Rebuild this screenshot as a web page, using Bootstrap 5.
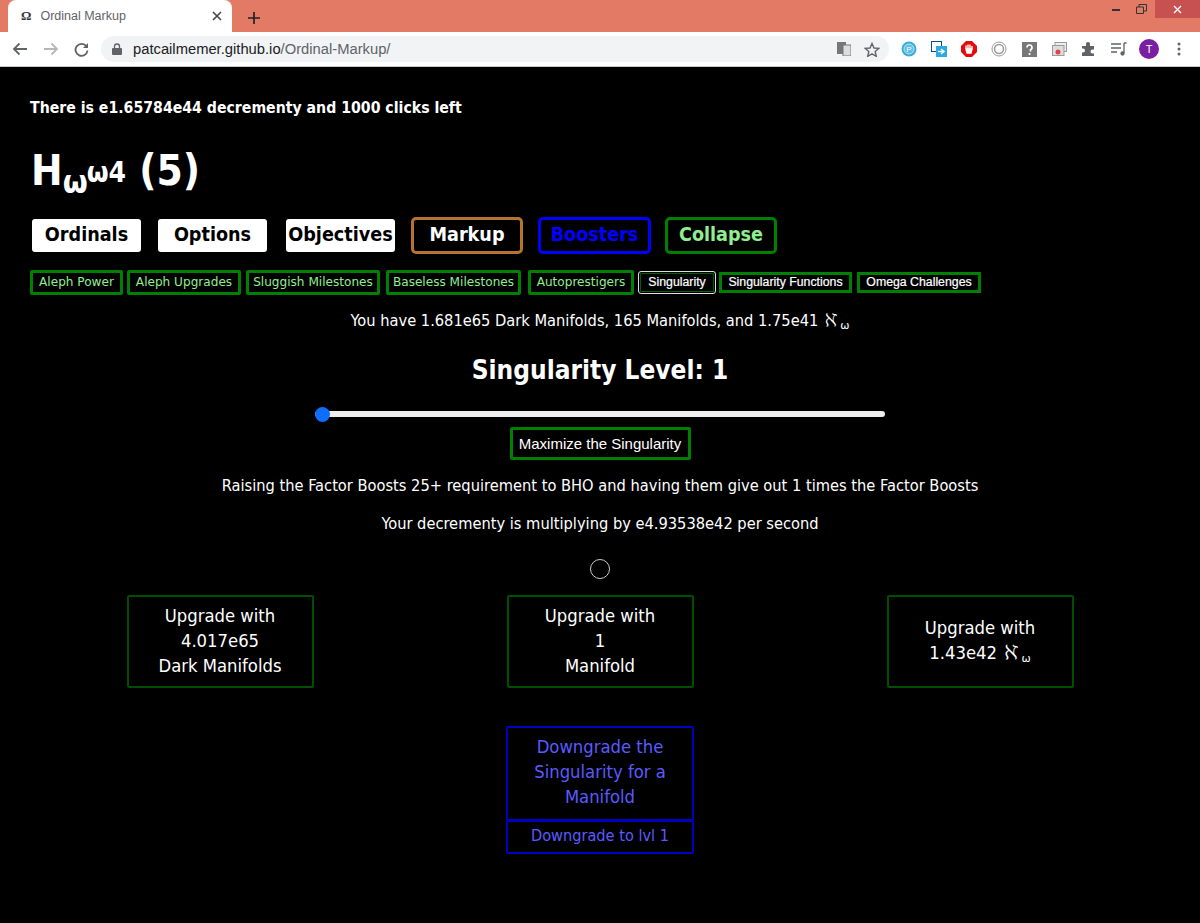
<!DOCTYPE html>
<html lang="en">
<head>
<meta charset="UTF-8" />
<meta name="viewport" content="width=device-width, initial-scale=1.0" />
<title>Ordinal Markup</title>
<link href="https://cdn.jsdelivr.net/npm/bootstrap@5.3.3/dist/css/bootstrap.min.css" rel="stylesheet" />
<style>
  html, body { height: 100%; }
  body { background: #000; color: #fff; font-family: "DejaVu Sans Condensed", "DejaVu Sans", sans-serif; overflow: hidden; }
  .tabstrip { height: 32px; background: #e27a66; }
  .chrome-tab { width: 224px; height: 32px; background: #fff; border-radius: 8px 8px 0 0; margin-left: 8px; padding: 0 10px 0 13px; font: 12.5px "Liberation Sans", sans-serif; color: #5f6368; }
  .win-close { width: 45px; height: 18px; background: #c75050; }
  .toolbar { height: 35px; background: #fff; border-bottom: 1px solid #c8c8c8; padding-left: 12px; }
  .omnibox { width: 788px; flex-shrink: 0; height: 26px; background: #f1f3f4; border-radius: 13px; font: 14.75px "Liberation Sans", sans-serif; padding: 0 9px 0 11px; margin-left: 12px; color: #202124; }
  .omnibox span { color: #5f6368; }
  .tool-ico { width: 30px; display: flex; justify-content: center; }
  .game { height: 856px; padding: 0 30px; }
  .status-line { font-weight: 700; font-size: 15.7px; padding-top: 32px; line-height: 18px; }
  .big-title { font-weight: 700; font-size: 42px; line-height: 46px; margin: 31px 0 0 1px; }
  .big-title sub { font-size: 32px; bottom: -.25em; line-height: 0; }
  .big-title sup { font-size: 28px; top: -.12em; line-height: 0; margin-left: -1px; }
  .main-tabs { margin-top: 23px; padding-left: 2px; height: 36px; }
  .main-btn { height: 33px; width: 109px; background: #fff; color: #000; border-radius: 3px; font-weight: 700; font-size: 19.6px; line-height: 1; display: flex; align-items: center; justify-content: center; white-space: nowrap; margin-top: 2px; padding: 0 0 2px; }
  .main-btn.framed { height: 37px; margin-top: 0; background: #000; border: 3px solid; border-radius: 5px; }
  .sub-tabs { margin-top: 17px; height: 25px; }
  .sub-btn { height: 25px; border: 3px solid #008000; border-radius: 2px; background: #000; color: #90ee90; font-family: "DejaVu Sans", sans-serif; font-size: 12.1px; display: flex; align-items: center; justify-content: center; white-space: nowrap; padding: 0; }
  .sub-btn.plain { color: #fff; font-family: "Liberation Sans", sans-serif; font-size: 12.3px; height: 21px; border-radius: 0; -webkit-text-stroke: .2px #fff; }
  .sub-btn.picked { height: 23px; border: 1px solid #ddd; border-radius: 3px; box-shadow: inset 0 0 0 1px #000, inset 0 0 0 2px #006000; }
  .info-line { font-size: 16.3px; line-height: 20px; text-align: center; }
  .aleph { font-family: "Noto Sans CJK JP", "DejaVu Sans", sans-serif; font-size: 1em; line-height: 1; }
  .aleph sub { font-family: "DejaVu Sans", sans-serif; font-size: 11px; margin-left: 1px; }
  .level-title { font-size: 26px; font-weight: 700; line-height: 32px; text-align: center; margin-top: 23px; }
  .level-range { display: block; width: 570px; height: 16px; margin: 20px auto 0; }
  .level-range::-webkit-slider-runnable-track { background: #efefef; height: 6px; border-radius: 4px; }
  .level-range::-webkit-slider-thumb { margin-top: -4.5px; width: 15px; height: 15px; background: #0d6efd; }
  .max-btn { width: 181px; height: 33px; border: 3px solid #008000; background: #000; color: #fff; font: 15px "Liberation Sans", sans-serif; display: flex; align-items: center; justify-content: center; margin: 5px auto 0; padding: 0; border-radius: 2px; white-space: nowrap; }
  .ring { display: block; width: 20px; height: 20px; background: #000; border: 1.5px solid #ccc; margin: 0 auto; border-radius: 50%; }
  .upgrade-row { column-gap: 193px; margin-top: 16px; }
  .shop-box { width: 187px; height: 93px; background: #000; color: #fff; border: 2px solid #004f00; border-radius: 2px; font-size: 18.3px; line-height: 25px; display: flex; flex-direction: column; justify-content: center; align-items: center; text-align: center; padding: 0 10px 3px; }
  .down-stack { width: 188px; margin: 38px auto 0; color: #5a5aff; font-size: 18.3px; line-height: 25px; text-align: center; }
  .down-box { border: 2px solid #0000c0; border-radius: 2px; height: 95px; padding: 5px 10px 9px; background: #000; color: inherit; width: 100%; display: block; }
  .down-small { border: 2px solid #0000c0; border-radius: 2px; height: 34px; font-size: 16.2px; line-height: 28px; background: #000; color: inherit; width: 100%; display: block; padding: 0 0 2px; margin-top: -1px; }
</style>
</head>
<body>
  <div class="tabstrip d-flex align-items-end position-relative">
    <div class="chrome-tab d-flex align-items-center">
      <span style="font:700 13px 'Liberation Serif',serif;color:#333;margin-right:9px">Ω</span>
      <span class="flex-grow-1">Ordinal Markup</span>
      <svg width="10" height="10" viewBox="0 0 10 10"><path d="M1 1l8 8M9 1l-8 8" stroke="#444" stroke-width="1.6"/></svg>
    </div>
    <svg class="ms-3 mb-2" width="12" height="12" viewBox="0 0 12 12"><path d="M6 0v12M0 6h12" stroke="#222" stroke-width="1.7"/></svg>
    <div class="ms-auto d-flex align-items-start align-self-start">
      <svg class="me-3 mt-2" width="8" height="4" viewBox="0 0 8 4"><path d="M0 2h8" stroke="#333" stroke-width="2"/></svg>
      <svg class="me-2" style="margin-top:4px" width="11" height="10" viewBox="0 0 11 10"><path d="M.5 3h7v6.500h-7zM3 3V.5h7.500V7H8" fill="none" stroke="#333"/></svg>
      <div class="win-close d-flex align-items-center justify-content-center"><svg width="9" height="9" viewBox="0 0 9 9"><path d="M1 1l7 7M8 1l-7 7" stroke="#fff" stroke-width="1.4"/></svg></div>
    </div>
  </div>
  <div class="toolbar d-flex align-items-center">
    <svg width="16" height="14" viewBox="0 0 16 14"><path d="M15 7H2M7.500 1.500L2 7l5.500 5.500" fill="none" stroke="#5f6368" stroke-width="1.800"/></svg>
    <svg style="margin-left:15px" width="16" height="14" viewBox="0 0 16 14"><path d="M1 7h13M8.500 1.500L14 7l-5.500 5.500" fill="none" stroke="#b4b6b9" stroke-width="1.800"/></svg>
    <svg style="margin-left:15px" width="15" height="15" viewBox="0 0 15 15"><path d="M12.500 4.500A6 6 0 1 0 13.500 8.500" fill="none" stroke="#5f6368" stroke-width="1.800"/><path d="M14 1v5H9z" fill="#5f6368"/></svg>
    <div class="omnibox d-flex align-items-center">
      <svg style="margin-right:11px" width="10" height="12" viewBox="0 0 10 12"><path d="M2.500 5V3.500a2.500 2.500 0 0 1 5 0V5" fill="none" stroke="#5f6368" stroke-width="1.300"/><rect y="5" width="10" height="7" rx="1" fill="#5f6368"/></svg>
      patcailmemer.github.io<span>/Ordinal-Markup/</span>
      <svg class="ms-auto" width="14" height="14" viewBox="0 0 14 14"><rect width="9" height="12" fill="#777"/><rect x="6" y="3" width="8" height="11" fill="#ddd" stroke="#777"/></svg>
      <svg style="margin-left:13px" width="16" height="15" viewBox="0 0 16 15"><path d="M8 1.500l2 4.500 4.800.4-3.600 3.200 1.100 4.700L8 11.800l-4.300 2.500 1.100-4.700L1.200 6.400 6 6z" fill="none" stroke="#5f6368" stroke-width="1.400"/></svg>
    </div>
    <div class="d-flex align-items-center" style="margin-left:5px">
      <span class="tool-ico"><svg width="16" height="16"><circle cx="8" cy="8" r="7.500" fill="#3fa9d8"/><circle cx="8" cy="8" r="5" fill="#5cc0ea" stroke="#fff" stroke-width=".6"/><text x="8" y="11" font-size="8" fill="#fff" text-anchor="middle" font-family="Liberation Sans">P</text></svg></span>
      <span class="tool-ico"><svg width="16" height="16"><rect x=".5" y=".5" width="10" height="10" fill="none" stroke="#0b4f8a"/><rect x="5" y="5" width="11" height="11" fill="#29abe2"/><path d="M7 10.500h5M10 8l3 2.500-3 2.500" fill="none" stroke="#fff" stroke-width="1.500"/></svg></span>
      <span class="tool-ico"><svg width="16" height="16"><path d="M5 0h6l5 5v6l-5 5H5l-5-5V5z" fill="#e30b0b"/><path d="M5 8V4.500M7 8V3.500M9 8V3.500M11 8V5M5 8l1 4h4l1-4z" stroke="#fff" stroke-width="1.400" fill="#fff"/></svg></span>
      <span class="tool-ico"><svg width="16" height="16" fill="none" stroke="#9a9a9a"><circle cx="8" cy="8" r="7"/><circle cx="8" cy="8" r="4.500" stroke-width="1.500"/></svg></span>
      <span class="tool-ico"><svg width="15" height="15"><rect width="15" height="15" fill="#777"/><path d="M5 5.500a2.500 2.500 0 1 1 3.500 2.300V9.500M7.500 11v2" fill="none" stroke="#fff" stroke-width="1.700"/></svg></span>
      <span class="tool-ico"><svg width="15" height="14"><rect x="3" y=".5" width="11.500" height="9" fill="#eee" stroke="#999"/><rect x=".5" y="3.500" width="11.500" height="10" fill="#ddd" stroke="#999"/><circle cx="6" cy="10" r="2.500" fill="#d44"/></svg></span>
      <span class="tool-ico"><svg width="16" height="16" viewBox="0 0 16 16"><path d="M1 5h4V3a2 2 0 0 1 4 0v2h4v3.500h-1.500a2 2 0 0 0 0 4H13V15H1v-3.500h1a2 2 0 0 0 0-4H1z" fill="#5f6368"/></svg></span>
      <span class="tool-ico"><svg width="16" height="14" viewBox="0 0 16 14" fill="none" stroke="#5f6368" stroke-width="1.300"><path d="M0 2h10M0 6h10M0 10h6"/><path d="M13 1v10M15.500 1H13"/><circle cx="11.500" cy="11.500" r="1.500" fill="#5f6368"/></svg></span>
      <span class="tool-ico"><svg width="20" height="20"><circle cx="10" cy="10" r="10" fill="#7b1fa2"/><text x="10" y="14" font-size="11" fill="#fff" text-anchor="middle" font-family="Liberation Sans">T</text></svg></span>
      <span class="tool-ico"><svg width="4" height="14"><circle cx="2" cy="2" r="1.500" fill="#5f6368"/><circle cx="2" cy="7" r="1.500" fill="#5f6368"/><circle cx="2" cy="12" r="1.500" fill="#5f6368"/></svg></span>
    </div>
  </div>

  <main class="game">
    <div class="status-line">There is e1.65784e44 decrementy and 1000 clicks left</div>
    <h1 class="big-title">H<sub>ω</sub><sup>ω4</sup> (5)</h1>

    <div class="main-tabs d-flex">
      <button class="main-btn border-0">Ordinals</button>
      <button class="main-btn border-0" style="margin-left:17px">Options</button>
      <button class="main-btn border-0" style="margin-left:19px">Objectives</button>
      <button class="main-btn framed text-white" style="margin-left:16px;width:112px;border-color:#b87333">Markup</button>
      <button class="main-btn framed" style="margin-left:15px;width:113px;border-color:#0000ff;color:#0000ff">Boosters</button>
      <button class="main-btn framed" style="margin-left:14px;width:112px;border-color:#008000;color:#90ee90">Collapse</button>
    </div>

    <div class="sub-tabs d-flex align-items-center">
      <button class="sub-btn" style="width:93px">Aleph Power</button>
      <button class="sub-btn" style="width:114px;margin-left:4px">Aleph Upgrades</button>
      <button class="sub-btn" style="width:134px;margin-left:5px">Sluggish Milestones</button>
      <button class="sub-btn" style="width:135px;margin-left:6px">Baseless Milestones</button>
      <button class="sub-btn" style="width:106px;margin-left:7px">Autoprestigers</button>
      <button class="sub-btn plain picked" style="width:78px;margin-left:4px">Singularity</button>
      <button class="sub-btn plain" style="width:133px;margin-left:3px">Singularity Functions</button>
      <button class="sub-btn plain" style="width:124px;margin-left:5px">Omega Challenges</button>
    </div>

    <div class="info-line" style="margin-top:16px">You have 1.681e65 Dark Manifolds, 165 Manifolds, and 1.75e41 <span class="aleph">ℵ<sub>ω</sub></span></div>

    <div class="level-title">Singularity Level: 1</div>
    <input type="range" class="form-range level-range" min="1" max="100" value="1" />
    <button class="max-btn">Maximize the Singularity</button>

    <div class="info-line" style="margin-top:16px">Raising the Factor Boosts 25+ requirement to BHO and having them give out 1 times the Factor Boosts</div>
    <div class="info-line" style="margin-top:18px">Your decrementy is multiplying by e4.93538e42 per second</div>

    <div style="margin-top:25px"><input type="radio" class="ring form-check-input mt-0" /></div>

    <div class="upgrade-row d-flex justify-content-center">
      <button class="shop-box"><span>Upgrade with</span><span>4.017e65</span><span>Dark Manifolds</span></button>
      <button class="shop-box"><span>Upgrade with</span><span>1</span><span>Manifold</span></button>
      <button class="shop-box"><span>Upgrade with</span><span>1.43e42 <span class="aleph">ℵ<sub>ω</sub></span></span></button>
    </div>

    <div class="down-stack">
      <button class="down-box">Downgrade the Singularity for a Manifold</button>
      <button class="down-small">Downgrade to lvl 1</button>
    </div>
  </main>

  <script src="https://cdn.jsdelivr.net/npm/bootstrap@5.3.3/dist/js/bootstrap.bundle.min.js"></script>
</body>
</html>
